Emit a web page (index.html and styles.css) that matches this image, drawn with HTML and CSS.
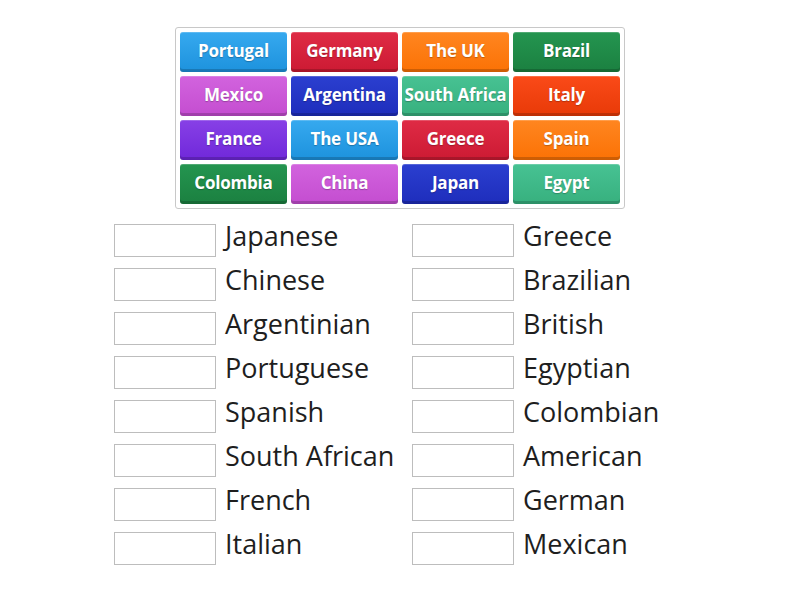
FILE: index.html
```html
<!DOCTYPE html>
<html>
<head>
<meta charset="utf-8">
<link rel="stylesheet" href="styles.css">
</head>
<body>
<div class="page">
  <div class="panel">
    <div class="tile blue">Portugal</div>
    <div class="tile red">Germany</div>
    <div class="tile orange">The UK</div>
    <div class="tile green">Brazil</div>
    <div class="tile pink">Mexico</div>
    <div class="tile navy">Argentina</div>
    <div class="tile teal">South Africa</div>
    <div class="tile vermilion">Italy</div>
    <div class="tile purple">France</div>
    <div class="tile blue">The USA</div>
    <div class="tile red">Greece</div>
    <div class="tile orange">Spain</div>
    <div class="tile green">Colombia</div>
    <div class="tile pink">China</div>
    <div class="tile navy">Japan</div>
    <div class="tile teal">Egypt</div>
  </div>
  <div class="answers">
    <div class="col">
      <div class="item"><div class="box"></div><span class="label">Japanese</span></div>
      <div class="item"><div class="box"></div><span class="label">Chinese</span></div>
      <div class="item"><div class="box"></div><span class="label">Argentinian</span></div>
      <div class="item"><div class="box"></div><span class="label">Portuguese</span></div>
      <div class="item"><div class="box"></div><span class="label">Spanish</span></div>
      <div class="item"><div class="box"></div><span class="label">South African</span></div>
      <div class="item"><div class="box"></div><span class="label">French</span></div>
      <div class="item"><div class="box"></div><span class="label">Italian</span></div>
    </div>
    <div class="col">
      <div class="item"><div class="box"></div><span class="label">Greece</span></div>
      <div class="item"><div class="box"></div><span class="label">Brazilian</span></div>
      <div class="item"><div class="box"></div><span class="label">British</span></div>
      <div class="item"><div class="box"></div><span class="label">Egyptian</span></div>
      <div class="item"><div class="box"></div><span class="label">Colombian</span></div>
      <div class="item"><div class="box"></div><span class="label">American</span></div>
      <div class="item"><div class="box"></div><span class="label">German</span></div>
      <div class="item"><div class="box"></div><span class="label">Mexican</span></div>
    </div>
  </div>
</div>
</body>
</html>
```

FILE: styles.css
```css
html, body {
  margin: 0;
  padding: 0;
  background: #ffffff;
}
body {
  font-family: "Open Sans", "Liberation Sans", sans-serif;
  width: 800px;
  height: 600px;
  overflow: hidden;
}
.page {
  padding-top: 27px;
}
.panel {
  width: 440px;
  margin: 0 auto;
  padding: 4px;
  border: 1px solid #c8c8c8;
  border-radius: 3px;
  display: grid;
  grid-template-columns: repeat(4, 107px);
  grid-auto-rows: 40px;
  gap: 4px;
}
.tile {
  border-radius: 3px;
  color: #ffffff;
  font-weight: 700;
  font-size: 17px;
  display: flex;
  align-items: center;
  justify-content: center;
  padding-bottom: 3px;
  box-sizing: border-box;
  white-space: nowrap;
  letter-spacing: -0.2px;
  text-shadow: 0 1px 1px rgba(0,0,0,0.25);
  box-shadow: inset 0 -3px 0 rgba(0,0,0,0.18), inset 0 1px 0 rgba(255,255,255,0.2);
}
.blue { background: linear-gradient(#36a9ef, #1d92dd); }
.red { background: linear-gradient(#df2b45, #cc1a33); }
.orange { background: linear-gradient(#ff8620, #fb7205); }
.green { background: linear-gradient(#249550, #1b8040); }
.pink { background: linear-gradient(#d263de, #c44dd0); }
.navy { background: linear-gradient(#2b3fd0, #1e2dbc); }
.teal { background: linear-gradient(#47c293, #37b07e); }
.vermilion { background: linear-gradient(#fa4a18, #e83a08); }
.purple { background: linear-gradient(#8740e6, #7028da); }

.answers {
  display: flex;
  margin-top: 15px;
  padding-left: 114px;
}
.col {
  width: 298px;
  display: flex;
  flex-direction: column;
  gap: 11px;
}
.item {
  display: flex;
  align-items: flex-start;
  height: 33px;
}
.box {
  width: 100px;
  height: 31px;
  border: 1px solid #bdbdbd;
  flex: none;
}
.label {
  margin-left: 9px;
  font-size: 27px;
  line-height: 27px;
  margin-top: -2px;
  color: #1e1e1e;
  white-space: nowrap;
}
```
